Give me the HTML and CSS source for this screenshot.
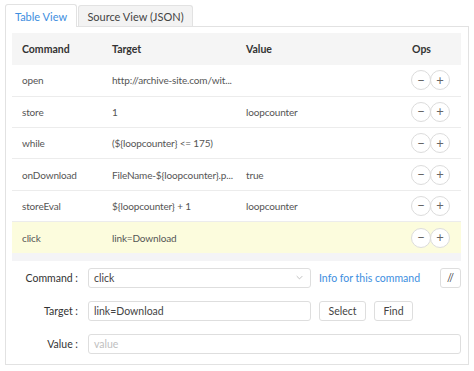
FILE: index.html
```html
<!DOCTYPE html>
<html lang="en">
<head>
    <meta charset="UTF-8">
    <meta name="viewport" content="width=device-width, initial-scale=1.0">
    <title>Command Editor</title>
    <link rel="stylesheet" href="styles.css">
</head>
<body>
    <div class="tabs">
        <div class="tab tab-active">Table View</div>
        <div class="tab">Source View (JSON)</div>
    </div>
    <div class="panel">
        <div class="table-wrap">
            <table class="cmd-table">
                <thead>
                    <tr>
                        <th class="col-cmd">Command</th>
                        <th class="col-target">Target</th>
                        <th class="col-value">Value</th>
                        <th class="col-ops">Ops</th>
                    </tr>
                </thead>
                <tbody>
                    <tr>
                        <td>open</td>
                        <td>http://archive-site.com/wit...</td>
                        <td></td>
                        <td class="ops"><span class="op-btn">&minus;</span><span class="op-btn">+</span></td>
                    </tr>
                    <tr>
                        <td>store</td>
                        <td>1</td>
                        <td>loopcounter</td>
                        <td class="ops"><span class="op-btn">&minus;</span><span class="op-btn">+</span></td>
                    </tr>
                    <tr>
                        <td>while</td>
                        <td>(${loopcounter} &lt;= 175)</td>
                        <td></td>
                        <td class="ops"><span class="op-btn">&minus;</span><span class="op-btn">+</span></td>
                    </tr>
                    <tr>
                        <td>onDownload</td>
                        <td>FileName-${loopcounter}.p...</td>
                        <td>true</td>
                        <td class="ops"><span class="op-btn">&minus;</span><span class="op-btn">+</span></td>
                    </tr>
                    <tr>
                        <td>storeEval</td>
                        <td>${loopcounter} + 1</td>
                        <td>loopcounter</td>
                        <td class="ops"><span class="op-btn">&minus;</span><span class="op-btn">+</span></td>
                    </tr>
                    <tr class="row-selected">
                        <td>click</td>
                        <td>link=Download</td>
                        <td></td>
                        <td class="ops"><span class="op-btn">&minus;</span><span class="op-btn">+</span></td>
                    </tr>
                </tbody>
            </table>
            <div class="table-strip"></div>
        </div>

        <div class="cmd-form">
            <div class="form-row">
                <label class="form-label">Command :</label>
                <div class="field select-field">
                    <span>click</span>
                    <svg class="caret" viewBox="0 0 10 6" width="7" height="5">
                        <path d="M1 1l4 4 4-4" fill="none" stroke="#b5b5b5" stroke-width="1.2"/>
                    </svg>
                </div>
                <a class="info-link" href="#">Info for this command</a>
                <span class="btn btn-comment">//</span>
            </div>
            <div class="form-row">
                <label class="form-label">Target :</label>
                <div class="field">link=Download</div>
                <span class="btn btn-select">Select</span>
                <span class="btn btn-find">Find</span>
            </div>
            <div class="form-row">
                <label class="form-label">Value :</label>
                <div class="field field-wide placeholder">value</div>
            </div>
        </div>
    </div>
</body>
</html>
```

FILE: styles.css
```css
*{
    box-sizing: border-box;
}
body{
    margin: 0;
    background: #fff;
    font-family: Lato, "Liberation Sans", sans-serif;
    font-size: 10.5px;
    color: #555;
}
.tabs{
    display: flex;
    align-items: flex-end;
    padding: 3px 0 0 5px;
    height: 26px;
}
.tab{
    height: 21px;
    width: 115px;
    margin-left: 1px;
    border: 1px solid #e2e2e2;
    border-bottom: none;
    border-radius: 3px 3px 0 0;
    background: #f3f3f3;
    color: #444;
    font-size: 11px;
    display: flex;
    align-items: center;
    justify-content: center;
}
.tab-active{
    height: 23px;
    width: 72px;
    margin-left: 0;
    background: #fff;
    color: #3d8ee0;
    position: relative;
    top: 1px;
}
.panel{
    margin: 0 5px;
    border: 1px solid #e2e2e2;
    padding: 6px 7px 10px 6px;
}
.cmd-table{
    width: 100%;
    border-collapse: collapse;
    table-layout: fixed;
}
.cmd-table th{
    height: 32px;
    background: #f5f5f5;
    text-align: left;
    font-weight: 700;
    color: #333;
    padding: 0 0 0 10px;
}
.col-cmd{ width: 90px; }
.col-target{ width: 134px; }
.col-value{ width: 164px; }
.cmd-table th.col-ops{
    padding-left: 12px;
}
.cmd-table td{
    height: 31.33px;
    padding: 0 0 0 10px;
    border-top: 1px solid #ececec;
    white-space: nowrap;
    font-size: 10px;
    letter-spacing: -0.15px;
}
.cmd-table td.ops{
    padding-left: 11px;
    font-size: 0;
}
.cmd-table tbody tr:first-child td{
    border-top: none;
}
.row-selected td{
    background: #fcfcdd;
}
.op-btn{
    display: inline-flex;
    align-items: center;
    justify-content: center;
    width: 20px;
    height: 20px;
    border: 1px solid #dcdcdc;
    border-radius: 50%;
    background: #fff;
    color: #666;
    font-size: 13px;
    line-height: 1;
    vertical-align: middle;
}
.op-btn + .op-btn{
    margin-left: -1px;
}
.table-strip{
    height: 8px;
    background: #f4f4f6;
}
.cmd-form{
    padding-top: 7px;
    display: flex;
    flex-direction: column;
    gap: 13px;
}
.form-row{
    display: flex;
    align-items: center;
    height: 20px;
}
.form-label{
    width: 66px;
    margin-right: 10px;
    text-align: right;
    color: #333;
}
.field{
    width: 223px;
    height: 20px;
    border: 1px solid #dedede;
    border-radius: 3px;
    padding: 0 5px;
    display: flex;
    align-items: center;
    color: #444;
}
.select-field{
    justify-content: space-between;
}
.caret{
    margin-right: 2px;
}
.field-wide{
    width: 373px;
}
.placeholder{
    color: #c0c0c0;
}
.info-link{
    margin-left: 8px;
    color: #3d8ee0;
    text-decoration: none;
}
.btn{
    height: 20px;
    border: 1px solid #dedede;
    border-radius: 3px;
    display: flex;
    align-items: center;
    justify-content: center;
    color: #444;
    margin-left: 8px;
}
.btn-comment{
    width: 21px;
    margin-left: auto;
}
.btn-select{
    width: 47px;
}
.btn-find{
    width: 39px;
}
```
